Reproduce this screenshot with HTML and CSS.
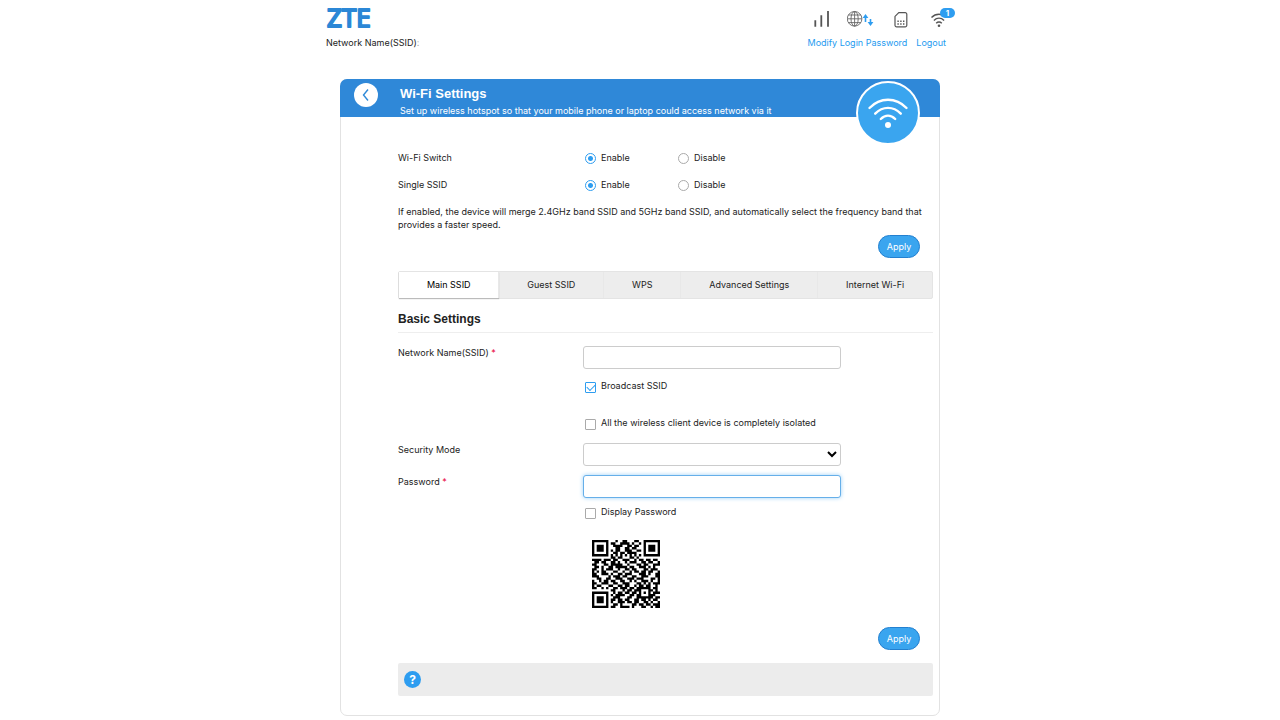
FILE: index.html
```html
<!DOCTYPE html>
<html lang="en">
<head>
  <meta charset="UTF-8" />
  <meta name="viewport" content="width=device-width, initial-scale=1.0"/>
  <title>Wi-Fi Settings</title>
  <link rel="stylesheet" href="styles.css">
</head>
<body>

<div class="page">
  <header class="top">
    <div class="brand">
      <svg class="logo" width="50" height="36" viewBox="0 0 50 36"><text x="1" y="27">ZTE</text></svg>
      <div class="ssid">Network Name(SSID)<span class="colon">:</span></div>
    </div>
    <div class="status">
      <div class="icons">
        <svg width="16" height="18" viewBox="0 0 16 18" fill="none" stroke="#555" stroke-width="1.8">
          <path d="M2.3 10.3v6.4M8.3 5.2v11.5M15 1v15.7"/>
        </svg>
        <svg width="29" height="18" viewBox="0 0 29 18" fill="none" stroke="#666" stroke-width="0.9">
          <circle cx="7.6" cy="8.8" r="7.3"/>
          <ellipse cx="7.6" cy="8.8" rx="3.6" ry="7.3"/>
          <path d="M7.6 1.5v14.6M.3 8.8h14.6M1.4 5h12.4M1.4 12.6h12.4"/>
          <path d="M18.5 12V6M23.5 9v5" stroke="#2e9df0" stroke-width="1.6"/>
          <path d="M15.6 8l2.9-4 2.9 4zM20.6 12l2.9 4 2.9-4z" fill="#2e9df0" stroke="none"/>
        </svg>
        <svg width="18" height="18" viewBox="0 0 18 18" fill="none" stroke="#555" stroke-width="1.2">
          <path d="M4.8 2.6h6.4a1.6 1.6 0 0 1 1.6 1.6v11a1.6 1.6 0 0 1-1.6 1.6H2.6A1.6 1.6 0 0 1 1 15.2V6.4z"/>
          <path d="M3.4 11.2h1.4M6.2 11.2h1.4M9 11.2h1.4M3.4 14h1.4M6.2 14h1.4M9 14h1.4" stroke-width="1.4"/>
        </svg>
        <div class="clients">
          <svg width="16" height="18" viewBox="0 0 16 18" fill="none" stroke="#555" stroke-width="1.4">
            <path d="M1.5 7.5c4.2-4.3 10.8-4.3 15 0M3.9 10.4c3-3 7.2-3 10.2 0M6.2 13.2c1.7-1.7 3.9-1.7 5.6 0"/>
            <circle cx="9" cy="15.8" r="1.3" fill="#555" stroke="none"/>
          </svg>
          <span class="badge">1</span>
        </div>
      </div>
      <nav class="links">
        <a href="#">Modify Login Password</a>
        <a href="#">Logout</a>
      </nav>
    </div>
  </header>

  <main class="card">
    <div class="card-head">
      <button type="button" class="back" aria-label="Back">
        <svg width="10" height="14" viewBox="0 0 10 14" fill="none" stroke="#2f8ad8" stroke-width="1.4"><path d="M7 1.5L2.5 7 7 12.5"/></svg>
      </button>
      <div>
        <h1>Wi-Fi Settings</h1>
        <p>Set up wireless hotspot so that your mobile phone or laptop could access network via it</p>
      </div>
      <div class="wifi-mark">
        <svg width="42" height="34" viewBox="0 0 42 34" fill="none" stroke="#fff" stroke-width="2.4" stroke-linecap="round">
          <path d="M2.5 12c10.5-11 26.5-11 37 0M8.2 17.7c7.6-7.8 18-7.8 25.6 0M13.8 23c4.4-4.4 10-4.4 14.4 0"/>
          <circle cx="21" cy="29" r="3" fill="#fff" stroke="none"/>
        </svg>
      </div>
    </div>

    <div class="card-body">
      <form>
        <div class="row radio-row">
          <span>Wi-Fi Switch</span>
          <div class="options">
            <label class="option"><input type="radio" name="wifi" checked>Enable</label>
            <label class="option"><input type="radio" name="wifi">Disable</label>
          </div>
        </div>
        <div class="row radio-row">
          <span>Single SSID</span>
          <div class="options">
            <label class="option"><input type="radio" name="single" checked>Enable</label>
            <label class="option"><input type="radio" name="single">Disable</label>
          </div>
        </div>
        <p class="hint">If enabled, the device will merge 2.4GHz band SSID and 5GHz band SSID, and automatically select the frequency band that provides a faster speed.</p>
        <div class="actions"><button type="button" class="apply">Apply</button></div>
      </form>

      <nav class="tabs">
        <a href="#" class="active">Main SSID</a>
        <a href="#">Guest SSID</a>
        <a href="#">WPS</a>
        <a href="#">Advanced Settings</a>
        <a href="#">Internet Wi-Fi</a>
      </nav>

      <h2>Basic Settings</h2>
      <form>
        <div class="row">
          <label for="ssid">Network Name(SSID) <span class="req">*</span></label>
          <div>
            <input type="text" id="ssid" class="field">
            <label class="option check"><input type="checkbox" checked>Broadcast SSID</label>
            <label class="option check isolate"><input type="checkbox">All the wireless client device is completely isolated</label>
          </div>
        </div>
        <div class="row">
          <label for="security">Security Mode</label>
          <select id="security" class="field"><option></option></select>
        </div>
        <div class="row">
          <label for="password">Password <span class="req">*</span></label>
          <div>
            <input type="password" id="password" class="field current">
            <label class="option check"><input type="checkbox">Display Password</label>
            <svg class="qr" id="qr" viewBox="0 0 29 29"></svg>
          </div>
        </div>
        <div class="actions"><button type="button" class="apply">Apply</button></div>
      </form>

      <div class="help"><button type="button" aria-label="Help">?</button></div>
    </div>
  </main>
</div>

<script src="qr.js"></script>
</body>
</html>
```
FILE: styles.css
```css
* { box-sizing: border-box; }
body {
  margin: 0; background: #fff; color: #222;
  font: 9px/14px Inter, "Liberation Sans", sans-serif;
}
h1, h2, p { margin: 0; }
h1, h2 { font-family: "Liberation Sans", Arial, sans-serif; }
a { color: #1e9bf0; text-decoration: none; }
svg { display: block; }
button, input, select { font: inherit; margin: 0; }

.page { max-width: 628px; margin: 0 auto; }

.top {
  display: flex; justify-content: space-between;
  padding-right: 8px;
}
.logo {
  overflow: visible;
  font: 26px "Open Sans", sans-serif;
  fill: #2b87d6; stroke: #2b87d6;
  stroke-width: 2px; stroke-linejoin: round;
}
.colon { color: #aaa; }
.status {
  display: flex; flex-direction: column; align-items: flex-end;
  gap: 8px; padding-top: 10px;
}
.icons { display: flex; gap: 18px; }
.clients { position: relative; }
.badge {
  position: absolute; top: -2px; right: -9px;
  width: 15px; height: 10px; border-radius: 5px;
  background: #2e9df0; color: #fff;
  font-size: 8px; font-weight: bold; line-height: 10px; text-align: center;
}
.links { display: flex; gap: 9px; }

.card {
  margin: 29px 14px 3px;
  border: 1px solid #e2e2e2; border-radius: 7px;
}
.card-head {
  position: relative;
  display: flex; gap: 22px;
  height: 38px; margin: -1px -1px 0; padding: 4px 14px;
  background: #2f88d8; color: #fff;
  border-radius: 7px 7px 0 0;
}
.back {
  display: flex; align-items: center; justify-content: center;
  width: 24px; height: 24px; padding: 0;
  border: none; border-radius: 50%; background: #fff;
}
.card-head h1 { font-size: 13px; line-height: 22px; }
.card-head p { line-height: 12px; }
.wifi-mark {
  position: absolute; top: 2px; right: 20px;
  display: flex; align-items: center; justify-content: center;
  width: 64px; height: 64px;
  border: 2px solid #fff; border-radius: 50%;
  background: #3aa5ef;
}

.card-body { padding: 27px 6px 19px 57px; }
.row { display: grid; grid-template-columns: 185px 1fr; margin-bottom: 9px; }
.radio-row { height: 27px; align-items: center; margin-bottom: 0; }
.options { display: flex; }
.option { display: flex; align-items: center; gap: 5px; padding-left: 2px; }
.options .option { width: 93px; }
.hint { margin-top: 7px; line-height: 13px; }

input[type="radio"], input[type="checkbox"] {
  appearance: none; flex: none;
  width: 11px; height: 11px; margin-top: 2px;
  border: 1px solid #aaa; background: #fff;
}
input[type="radio"] { border-radius: 50%; }
input[type="checkbox"] { border-radius: 1px; }
input:checked { border-color: #2e9df0; }
input[type="radio"]:checked { background: radial-gradient(#2e9df0 0 2px, #fff 3px); }
input[type="checkbox"]:checked::before {
  content: ""; display: block;
  width: 7px; height: 4px; margin: 1px;
  border: solid #2e9df0; border-width: 0 0 1px 1px;
  transform: rotate(-45deg);
}

.actions { display: flex; justify-content: flex-end; padding: 4px 13px 0 0; }
.apply {
  width: 42px; height: 23px; padding: 0;
  border: 1px solid #2380d0; border-radius: 12px;
  background: #3aa5ef; color: #fff;
}

.tabs {
  display: flex; margin-top: 13px;
  border: 1px solid #e4e4e4; border-radius: 2px; background: #ededed;
}
.tabs a {
  flex: 1 1 auto; padding: 0 26px;
  line-height: 26px; text-align: center; color: #222;
  border-right: 1px solid #e8e8e8;
}
.tabs a:last-child { border-right: none; }
.tabs .active { background: #fff; color: #000; box-shadow: 0 1px 1px #bbb; }

h2 {
  margin: 11px 0 13px; padding-bottom: 4px;
  border-bottom: 1px solid #eee;
  font-size: 12px; line-height: 18px;
}
.req { color: #e8003a; }
.field {
  display: block; width: 258px; height: 23px; padding: 0 4px;
  border: 1px solid #ccc; border-radius: 3px; background: #fff;
}
.current { border-color: #66afe9; box-shadow: 0 0 4px #9bd0f8; }
.check { height: 20px; margin-top: 7px; }
.isolate { margin-top: 17px; margin-bottom: 1px; }
.current + .check { margin-top: 4px; }
.qr { width: 68px; height: 68px; margin: 18px 0 6px 9px; }

.help {
  display: flex; align-items: center;
  height: 33px; margin-top: 13px; padding-left: 6px;
  border-radius: 2px; background: #ececec;
}
.help button {
  width: 17px; height: 17px; padding: 0;
  border: none; border-radius: 50%;
  background: #2e9df0; color: #fff;
  font-size: 12px; font-weight: bold; line-height: 17px;
}
```
FILE: qr.js
```js
const rows = [
  "11111110001001100011001111111",
  "10000010110011110100101000001",
  "10111010011110011011001011101",
  "10111010001100110110001011101",
  "10111010101100111001101011101",
  "10000010011011011110001000001",
  "11111110101010101010101111111",
  "00000000110110001101000000000",
  "11110111011001110010110110110",
  "01101100110100101110011011001",
  "11000110111110010001101100111",
  "01101001101111101100111010100",
  "11001011100100110110001101110",
  "10101100011001001011011011001",
  "11001110100110111000111010011",
  "11100001011101100110011100011",
  "00110011001110011101110001101",
  "10010110110011001010011101001",
  "11001110011001110001101010111",
  "10110001100110110010110110010",
  "11001010011011101101111110110",
  "00000000110001011011100011010",
  "11111110010110110110101010111",
  "10000010101111001101100011100",
  "10111010011100011001111111011",
  "10111010110110110011011010110",
  "10111010100111011011001101001",
  "10000010011010000110110110111",
  "11111110110011110100011001011"
];

// one closed square per dark module
let d = "";
rows.forEach((row, y) => {
  [...row].forEach((cell, x) => {
    if (cell === "1") d += `M${x} ${y}h1v1h-1z`;
  });
});
const path = document.createElementNS("http://www.w3.org/2000/svg", "path");
path.setAttribute("d", d);
document.getElementById("qr").appendChild(path);
```
